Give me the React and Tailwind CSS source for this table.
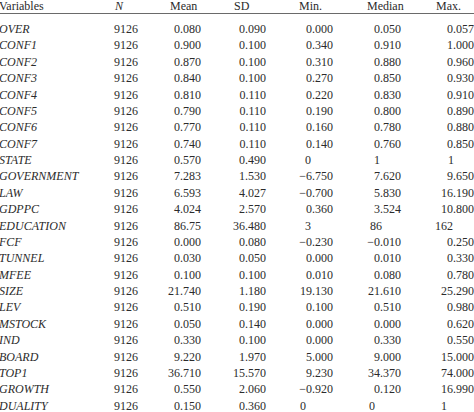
const rows = [
  ["OVER", "9126", "0.080", "0.090", "0.000", "0.050", "0.057"],
  ["CONF1", "9126", "0.900", "0.100", "0.340", "0.910", "1.000"],
  ["CONF2", "9126", "0.870", "0.100", "0.310", "0.880", "0.960"],
  ["CONF3", "9126", "0.840", "0.100", "0.270", "0.850", "0.930"],
  ["CONF4", "9126", "0.810", "0.110", "0.220", "0.830", "0.910"],
  ["CONF5", "9126", "0.790", "0.110", "0.190", "0.800", "0.890"],
  ["CONF6", "9126", "0.770", "0.110", "0.160", "0.780", "0.880"],
  ["CONF7", "9126", "0.740", "0.110", "0.140", "0.760", "0.850"],
  ["STATE", "9126", "0.570", "0.490", { v: "0", c: "pl-[39px]" }, { v: "1", c: "pl-[41px]" }, { v: "1", c: "pl-[47px]" }],
  ["GOVERNMENT", "9126", "7.283", "1.530", "\u22126.750", "7.620", "9.650"],
  ["LAW", "9126", "6.593", "4.027", "\u22120.700", "5.830", "16.190"],
  ["GDPPC", "9126", "4.024", "2.570", "0.360", "3.524", "10.800"],
  ["EDUCATION", "9126", "86.75", "36.480", { v: "3", c: "pl-[39px]" }, { v: "86", c: "pl-[37px]" }, { v: "162", c: "pl-[34px]" }],
  ["FCF", "9126", "0.000", "0.080", "\u22120.230", "\u22120.010", "0.250"],
  ["TUNNEL", "9126", "0.030", "0.050", "0.000", "0.010", "0.330"],
  ["MFEE", "9126", "0.100", "0.100", "0.010", "0.080", "0.780"],
  ["SIZE", "9126", "21.740", "1.180", "19.130", "21.610", "25.290"],
  ["LEV", "9126", "0.510", "0.190", "0.100", "0.510", "0.980"],
  ["MSTOCK", "9126", "0.050", "0.140", "0.000", "0.000", "0.620"],
  ["IND", "9126", "0.330", "0.100", "0.000", "0.330", "0.550"],
  ["BOARD", "9126", "9.220", "1.970", "5.000", "9.000", "15.000"],
  ["TOP1", "9126", "36.710", "15.570", "9.230", "34.370", "74.000"],
  ["GROWTH", "9126", "0.550", "2.060", "\u22120.920", "0.120", "16.990"],
  ["DUALITY", "9126", "0.150", "0.360", { v: "0", c: "pl-[34px]" }, { v: "0", c: "pl-[36px]" }, { v: "1", c: "pl-[40px]" }],
];

const grid = "grid grid-cols-[114px_46px_41px_65px_67px_68px_73px]";

function Num({ cell }) {
  if (typeof cell === "string") return <div className="text-right">{cell}</div>;
  return <div className={`text-left ${cell.c}`}>{cell.v}</div>;
}

export default function App() {
  return (
    <div
      className="w-[474px] h-[412px] overflow-hidden bg-white text-[#2b2b2b] text-[12px]"
      style={{ fontFamily: '"Liberation Serif", "Times New Roman", serif' }}
    >
      <div className={`${grid} h-[14px] leading-[12px] border-b border-[#6a6a6a]`}>
        <div className="-ml-[1px]">Variables</div>
        <div className="pl-[1px] italic">N</div>
        <div className="pl-[10px]">Mean</div>
        <div className="pl-[33px]">SD</div>
        <div className="pl-[33px]">Min.</div>
        <div className="pl-[34px]">Median</div>
        <div className="pl-[35px]">Max.</div>
      </div>
      <div className="pt-[7px] leading-[16.37px]">
        {rows.map((r) => (
          <div key={r[0]} className={grid}>
            <div className="italic -ml-[1px]">{r[0]}</div>
            <div>{r[1]}</div>
            <Num cell={r[2]} />
            <Num cell={r[3]} />
            <Num cell={r[4]} />
            <Num cell={r[5]} />
            <Num cell={r[6]} />
          </div>
        ))}
      </div>
    </div>
  );
}
